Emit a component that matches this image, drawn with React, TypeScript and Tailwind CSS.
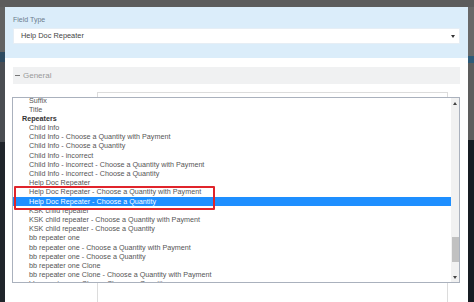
import React from "react";

const rows: { t: string; kind?: "group" | "sel" }[] = [
  { t: "Suffix" },
  { t: "Title" },
  { t: "Repeaters", kind: "group" },
  { t: "Child Info" },
  { t: "Child Info - Choose a Quantity with Payment" },
  { t: "Child Info - Choose a Quantity" },
  { t: "Child Info - incorrect" },
  { t: "Child Info - incorrect - Choose a Quantity with Payment" },
  { t: "Child Info - incorrect - Choose a Quantity" },
  { t: "Help Doc Repeater" },
  { t: "Help Doc Repeater - Choose a Quantity with Payment" },
  { t: "Help Doc Repeater - Choose a Quantity", kind: "sel" },
  { t: "KSK child repeater" },
  { t: "KSK child repeater - Choose a Quantity with Payment" },
  { t: "KSK child repeater - Choose a Quantity" },
  { t: "bb repeater one" },
  { t: "bb repeater one - Choose a Quantity with Payment" },
  { t: "bb repeater one - Choose a Quantity" },
  { t: "bb repeater one Clone" },
  { t: "bb repeater one Clone - Choose a Quantity with Payment" },
  { t: "bb repeater one Clone - Choose a Quantity" },
];

export default function App() {
  return (
    <div
      className="relative w-[474px] h-[302px] overflow-hidden bg-[#5f5f5f] flex flex-col"
      style={{ fontFamily: '"Liberation Sans", Arial, sans-serif' }}
    >
      {/* top backdrop strip */}
      <div className="h-[7px] bg-[#5c5c5c] shrink-0" />
      <div className="flex flex-1 min-h-0">
        {/* left backdrop */}
        <div className="w-[5px] flex flex-col shrink-0">
          <div className="h-[45px] bg-[#626262]" />
          <div className="h-[10px] bg-[#2d4a60]" />
          <div className="h-[80px] bg-[#4a4d52]" />
          <div className="flex-1 bg-[#20252b]" />
        </div>
        {/* modal */}
        <div className="flex-1 flex flex-col bg-white">
          <div className="h-[51px] bg-[#dbedfa] px-[8px] pt-[9px] flex flex-col">
            <div className="text-[7px] leading-[8px] text-[#6b7c8e] h-[12px]">Field Type</div>
            <div className="h-[16px] bg-white border border-[#e6eef5] flex items-center pl-[7px] pr-[4px]">
              <span className="flex-1 text-[7.4px] text-[#444]">Help Doc Repeater</span>
              <span className="w-0 h-0 border-l-[2px] border-r-[2px] border-t-[3px] border-l-transparent border-r-transparent border-t-[#333]" />
            </div>
          </div>
          <div className="flex-1 flex flex-col px-[8px] pt-[9px]">
            <div className="h-[17px] bg-[#f0f1f2] flex items-center pl-[2px] gap-[3px]">
              <span className="w-[5px] h-[1.5px] bg-[#777]" />
              <span className="text-[8px] text-[#9a9a9a]">General</span>
            </div>
            <div className="flex-1 flex pt-[8px]">
              <div className="w-[84px]" />
              <div className="w-[351px] border-l border-t border-r border-[#dcdcdc]" />
            </div>
          </div>
        </div>
        {/* right backdrop */}
        <div className="w-[6px] flex flex-col shrink-0">
          <div className="h-[49px] bg-[#686868]" />
          <div className="h-[7px] bg-[#2e5a78]" />
          <div className="h-[77px] bg-[#5d5d5d]" />
          <div className="flex-1 bg-[#161c23]" />
        </div>
      </div>

      {/* dropdown list popup */}
      <div className="absolute left-[12px] top-[97px] w-[448px] h-[186px] border border-[#aab1bd] bg-white flex">
        <div className="flex-1 overflow-hidden">
          <div className="-mt-[2.5px]">
            {rows.map((r, i) => (
              <div
                key={i}
                className={
                  "h-[9.2px] leading-[9.2px] text-[7.2px] whitespace-nowrap " +
                  (r.kind === "group"
                    ? "pl-[9px] font-bold text-[#333]"
                    : r.kind === "sel"
                    ? "pl-[16px] bg-[#1e8fff] text-white"
                    : "pl-[16px] text-[#555]")
                }
              >
                {r.t}
              </div>
            ))}
          </div>
        </div>
        <div className="w-[8px] bg-[#f1f1f1] flex flex-col items-center">
          <div className="h-[10px] flex items-center justify-center">
            <span className="w-0 h-0 border-l-[2px] border-r-[2px] border-b-[3px] border-l-transparent border-r-transparent border-b-[#444]" />
          </div>
          <div className="h-[129px]" />
          <div className="w-[7px] h-[25px] bg-[#c1c1c1]" />
          <div className="flex-1" />
          <div className="h-[10px] flex items-center justify-center">
            <span className="w-0 h-0 border-l-[2px] border-r-[2px] border-t-[3px] border-l-transparent border-r-transparent border-t-[#444]" />
          </div>
        </div>
      </div>

      {/* red annotation box */}
      <div className="absolute left-[14px] top-[186px] w-[201px] h-[24px] border-2 border-[#e0242b] rounded-[1px]" />
    </div>
  );
}
